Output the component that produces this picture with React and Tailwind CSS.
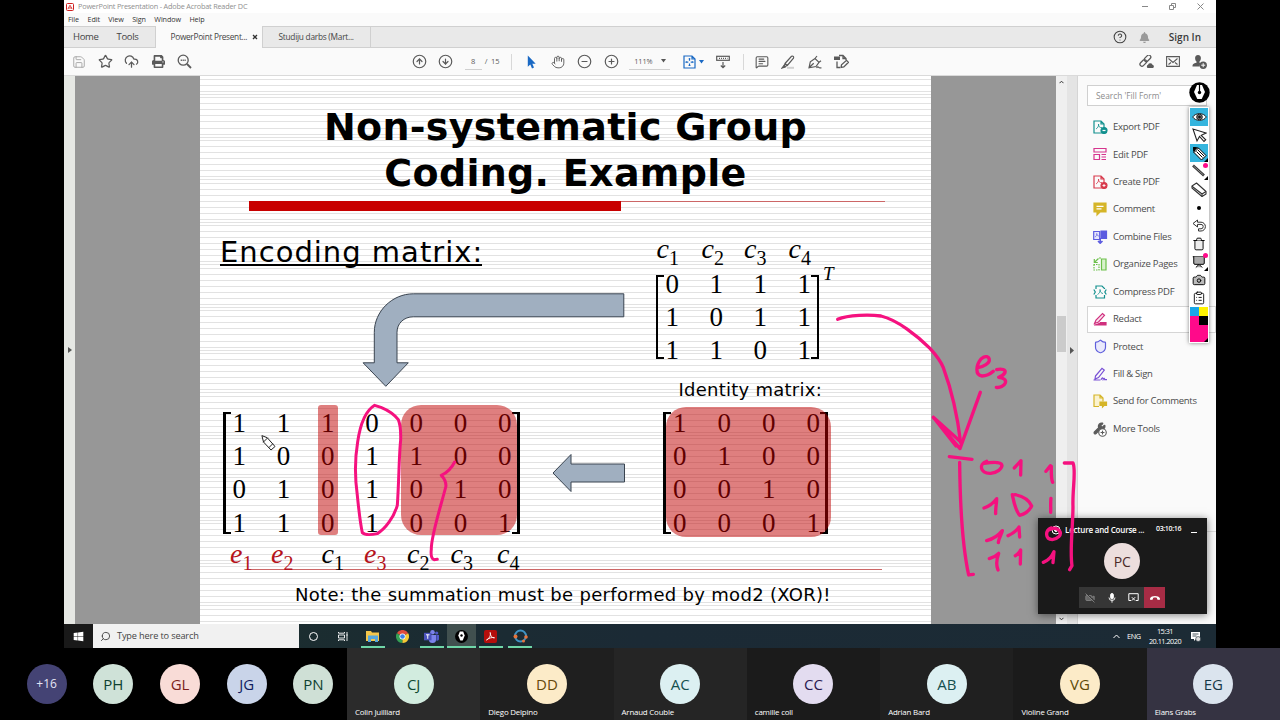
// App.jsx
import React from 'react';
import {
    Star,
    CloudUpload,
    Hand,
    CircleArrowUp,
    CircleArrowDown,
    CircleMinus,
    CirclePlus,
    MessageSquareText,
    CircleQuestionMark,
    Search,
    Trash2,
    ClipboardList,
    Camera,
    Shield,
    Wrench,
    VideoOff,
    Save,
    Presentation,
} from 'lucide-react';
import { FaBell, FaWindows, FaPrint } from 'react-icons/fa';

const encoding = ['1110000', '1001100', '0101010', '1101001'];
const checks = ['0111', '1011', '1101'];
const identity = ['1000', '0100', '0010', '0001'];

// Ruled slide paper: groups of lines repeat every 42.6px
const ruleLines = [];
for (let start = -24.6; start < 548; start += 42.6) {
    [0, 3.3, 9.3, 15.3, 21.4, 27.4, 33.5, 39.6].forEach((offset) => ruleLines.push(Math.round(start + offset)));
}

function Sym({ letter, index, red }) {
    return (
        <span className={red ? 'text-[#b5121b]' : 'text-black'}>
            <i className="text-[28px]">{letter}</i>
            <sub className="-bottom-[7px] text-[20px]">{index}</sub>
        </span>
    );
}

function Matrix({ rows, width, bracket }) {
    return (
        <div className="flex">
            <div className={`w-2 border-y-2 border-r-0 border-black ${bracket}`} />
            <div className={`flex flex-col pl-[2px] ${width}`}>
                {rows.map((row, i) => (
                    <div key={i} className="flex h-[33.2px] justify-between text-[27px] leading-[33.2px]">
                        {row.split('').map((digit, j) => (
                            <span key={j}>{digit}</span>
                        ))}
                    </div>
                ))}
            </div>
            <div className={`w-2 -scale-x-100 border-y-2 border-r-0 border-black ${bracket}`} />
        </div>
    );
}

function Slide() {
    return (
        <div className="relative h-[548px] w-[731px] shrink-0 overflow-hidden bg-white text-black">
            <svg className="absolute inset-0" width="731" height="548" shapeRendering="crispEdges">
                {ruleLines.map((y) => (
                    <rect key={y} x="0" y={y} width="731" height="1" fill="#e2e2e2" />
                ))}
            </svg>
            <div className="relative">
                <h1 className="pt-[27.5px] text-center font-['DejaVu_Sans'] text-[38px] leading-[46px] font-bold tracking-[0.3px]">
                    Non-systematic Group
                    <br />
                    Coding. Example
                </h1>
                <div className="mt-[5.5px] ml-[49px] h-[10px] w-[636px] border-t border-[#cc6666]">
                    <div className="-mt-px h-[10px] w-[372px] bg-[#c80000]" />
                </div>

                <div className="flex h-[358px] font-['Liberation_Serif']">
                    <div className="w-[455.5px] shrink-0">
                        <h2 className="mt-[23px] ml-5 h-9 font-['DejaVu_Sans'] text-[29px] leading-9 tracking-[1px] whitespace-nowrap">
                            <span className="inline-block h-[32px] w-[262px] border-b-2 border-black">Encoding matrix:</span>
                        </h2>
                        <svg className="mt-[23px] ml-[162px]" width="264" height="94" fill="#a0afc0" stroke="#3a4450" strokeWidth="1">
                            <path d="M261.5 .5H51C30 .5 12 18 12 39v30.500H.8L23.500 93 46 69.500H34.700V39c0-9 7-15.500 16.300-15.500h210.500z" transform="translate(.3 .3)" />
                        </svg>
                        <div className="mt-[20px] ml-[22.5px] flex items-center">
                            <Matrix rows={encoding} width="w-[281px]" bracket="mt-[5px] mb-[6px] border-l-[3px]" />
                            <svg className="ml-[32px]" width="75" height="40" fill="#a0afc0" stroke="#3a4450">
                                <path d="M1 20 19 1.500V11h53.500v18H19v9.500z" />
                            </svg>
                        </div>
                        <div className="-mt-[2px] ml-[30px] grid h-8 grid-cols-[41px_50.5px_42.5px_43px_43.5px_46.5px_24px] leading-8 whitespace-nowrap">
                            <Sym letter="e" index="1" red />
                            <Sym letter="e" index="2" red />
                            <Sym letter="c" index="1" />
                            <Sym letter="e" index="3" red />
                            <Sym letter="c" index="2" />
                            <Sym letter="c" index="3" />
                            <Sym letter="c" index="4" />
                        </div>
                    </div>

                    <div className="flex-1">
                        <div className="mt-[22px] ml-px grid h-8 grid-cols-[45px_42.5px_44.5px_24px] leading-8 whitespace-nowrap">
                            <Sym letter="c" index="1" />
                            <Sym letter="c" index="2" />
                            <Sym letter="c" index="3" />
                            <Sym letter="c" index="4" />
                        </div>
                        <div className="mt-[2.5px] flex">
                            <Matrix rows={checks} width="w-[147.5px]" bracket="mt-[7px] mb-[8px] border-l-2" />
                            <i className="ml-[4px] text-[19px] leading-[12px]">T</i>
                        </div>
                        <p className="mt-[11px] ml-[23px] font-['DejaVu_Sans'] text-[18px] leading-6 tracking-[0.25px] whitespace-nowrap">
                            Identity matrix:
                        </p>
                        <div className="mt-[5px] ml-[7.5px]">
                            <Matrix rows={identity} width="w-[149px]" bracket="mt-[5px] mb-[6px] border-l-[3px]" />
                        </div>
                    </div>
                </div>

                <div className="ml-[49px] h-px w-[633px] bg-[#cc6666]" />
                <p className="mt-[13px] ml-[95px] font-['DejaVu_Sans'] text-[18px] leading-6 tracking-[0.3px] whitespace-nowrap">
                    Note: the summation must be performed by mod2 (XOR)!
                </p>
            </div>

            {/* highlighted areas */}
            <div className="absolute top-[329px] left-[118px] h-[130px] w-5 rounded-[3px] bg-[rgba(192,0,0,0.5)]" />
            <div className="absolute top-[329px] left-[200.5px] h-[130px] w-[116.5px] rounded-[20px] bg-[rgba(192,0,0,0.5)]" />
            <div className="absolute top-[331px] left-[466px] h-[130px] w-[165px] rounded-[20px] bg-[rgba(192,0,0,0.5)]" />
        </div>
    );
}

function Tool({ children, className = '' }) {
    return <div className={`flex w-[26.4px] shrink-0 items-center justify-center ${className}`}>{children}</div>;
}

function Caret({ className = 'text-[#555]' }) {
    return (
        <svg width="5" height="4" viewBox="0 0 5 4" fill="currentColor" className={className}>
            <path d="M0 0h5L2.500 3.500z" />
        </svg>
    );
}

function Toolbar() {
    return (
        <div className="flex h-7 items-center border-b border-[#dadada] bg-[#fafafa] pr-[3px] pl-[2px] text-[#5a5a5a]">
            <Tool><Save size={14} strokeWidth={1.5} className="text-[#a0a0a0]" /></Tool>
            <Tool><Star size={15} strokeWidth={2} /></Tool>
            <Tool><CloudUpload size={15} strokeWidth={2} /></Tool>
            <Tool><FaPrint size={13} /></Tool>
            <Tool>
                <svg width="15" height="15" viewBox="0 0 15 15" fill="none" stroke="currentColor" strokeWidth="1.3">
                    <circle cx="6.200" cy="6.200" r="5" />
                    <path d="m10 10 4 4" strokeWidth="1.800" />
                    <path d="M3.700 6.200h5" strokeWidth="1.500" strokeDasharray="1.200 .7" />
                </svg>
            </Tool>
            <Tool className="ml-[208px]"><CircleArrowUp size={15} strokeWidth={1.9} /></Tool>
            <Tool><CircleArrowDown size={15} strokeWidth={1.9} /></Tool>
            <span className="ml-[6px] h-[17px] w-[17px] border-b border-[#d0d0d0] text-center text-[7.5px] leading-[17px]">8</span>
            <span className="ml-[3px] w-[26px] text-[7.5px] tracking-[-0.1px] whitespace-pre">/  15</span>
            <div className="h-4 w-px bg-[#d8d8d8]" />
            <Tool className="ml-[7px]">
                <svg width="9" height="14" viewBox="0 0 9 14" fill="#1a69c4">
                    <path d="M.8.500v11.200l2.500-2.300 1.700 4 2-.9-1.700-3.800h3.400z" />
                </svg>
            </Tool>
            <Tool><Hand size={14} strokeWidth={1.6} /></Tool>
            <Tool><CircleMinus size={15} strokeWidth={1.9} /></Tool>
            <Tool><CirclePlus size={15} strokeWidth={1.9} /></Tool>
            <span className="ml-[5px] flex h-[17px] w-[41px] items-center justify-between border-b border-[#d0d0d0] pr-1 pl-[5px] text-[7.3px] tracking-[-0.1px]">
                111% <Caret />
            </span>
            <span className="ml-[13px] flex w-[21px] items-center justify-between text-[#1a69c4]">
                <svg width="13" height="14" viewBox="0 0 13 14" fill="none" stroke="currentColor" strokeWidth="1.2">
                    <path d="M1 1h8l3 3v9H1zM9 1v3h3" />
                    <path d="M6.500 3.200v2.500M6.500 8.500V11M2.700 7.100h2.600M7.700 7.100h2.600" />
                    <path d="m5.500 4.200 1-1 1 1M5.500 10l1 1 1-1M3.700 6.100l-1 1 1 1M9.300 6.100l1 1-1 1" strokeWidth=".7" />
                </svg>
                <Caret className="text-[#1a69c4]" />
            </span>
            <Tool className="ml-[6px]">
                <svg width="14" height="14" viewBox="0 0 14 14" fill="none" stroke="currentColor" strokeWidth="1.200">
                    <rect x=".7" y="1.300" width="12.600" height="4" />
                    <path d="M3 3.300h8.500" strokeDasharray="1 1" />
                    <path d="M7 7v5.500M4.800 10.500 7 12.700l2.200-2.200" />
                </svg>
            </Tool>
            <div className="ml-[6px] h-4 w-px bg-[#d8d8d8]" />
            <Tool className="ml-[5px]"><MessageSquareText size={14} strokeWidth={1.9} /></Tool>
            <Tool>
                <svg width="14" height="14" viewBox="0 0 14 14" fill="none" stroke="currentColor" strokeWidth="1.200">
                    <path d="M6 12.800h7" stroke="#d0d0d0" strokeWidth="2" />
                    <path d="M4 8.500 10.500 1.300c1.500-.7 2.600.4 2 1.800L6.300 10.500 3 12zM4 8.500l2.300 2" />
                    <path d="m1 13 2-2.500 1.200 1.400z" fill="currentColor" />
                </svg>
            </Tool>
            <Tool>
                <svg width="14" height="14" viewBox="0 0 14 14" fill="none" stroke="currentColor" strokeWidth="1.200">
                    <path d="m1 12.800 1.300-6L7 3.500l4 3.800-3 4.200zM7 3.500 9 1M11 7.300l2-1.500M1 12.800l4.700-4.500" />
                    <path d="M8.500 13c1.500-2 2-.8 2.500-.4.600.5 1 0 2.500.4" />
                </svg>
            </Tool>
            <Tool>
                <svg width="15" height="15" viewBox="0 0 15 15" fill="none" stroke="currentColor" strokeWidth="1.300">
                    <path d="M5 1.500h4l3 3v1.500M9 1.500v3h3M3 7.500v6h3" />
                    <rect x="0" y="2.500" width="6" height="3.500" fill="currentColor" stroke="none" />
                    <path d="m7 13.500.5-2.700 5-4.500 2 2-4.700 4.700z" />
                </svg>
            </Tool>
            <Tool className="ml-auto">
                <svg width="16" height="14" viewBox="0 0 16 14" fill="none" stroke="currentColor" strokeWidth="1.300">
                    <rect x="4.800" y="1.300" width="7.500" height="4" rx="2" transform="rotate(-45 8.500 3.300)" />
                    <rect x=".5" y="6" width="7.500" height="4" rx="2" transform="rotate(-45 4.200 8)" />
                    <path d="M8.500 13a2 2 0 0 1 .5-3.300 2.500 2.500 0 0 1 4.500 0A1.800 1.800 0 0 1 14 13z" fill="currentColor" stroke="none" />
                </svg>
            </Tool>
            <Tool>
                <svg width="14" height="11" viewBox="0 0 14 11" fill="none" stroke="currentColor" strokeWidth="1.100">
                    <path d="M.6.600h12.800v9.800H.6zM2.500 2.500 7 6.500l4.500-4M2.500 8.500l2.500-2M11.500 8.500 9 6.500" />
                </svg>
            </Tool>
            <Tool>
                <svg width="15" height="14" viewBox="0 0 15 14" fill="currentColor">
                    <path d="M6 0c2 0 3 1.500 2.900 3.200C8.800 5 8 6 7.500 6.500v1.200L9 8.300a4 4 0 0 0-1.500 3.200H.5c0-2.500.8-3 4-3.800V6.500C3.800 6 3.200 5 3.100 3.200 3 1.500 4 0 6 0z" />
                    <circle cx="11.200" cy="10.200" r="3.700" />
                    <path d="M11.200 8.200v4M9.200 10.200h4" stroke="#fafafa" strokeWidth="1" />
                </svg>
            </Tool>
        </div>
    );
}

const doc = 'M1 1h7l3 3v9H1zM8 1v3h3';
const panelItems = [
    {
        label: 'Export PDF',
        icon: (
            <g stroke="#12908e">
                <path d={doc} />
                <path d="M3 9c2-1 3-4 2.500-5C5.500 7 7 8 9 7.500" strokeWidth=".8" />
                <circle cx="11" cy="10.500" r="3" fill="#12908e" />
                <path d="M9.500 10.500h3" stroke="#fff" />
            </g>
        ),
    },
    {
        label: 'Edit PDF',
        icon: <path d="M1 1.500h12v3.500H1zM1 7.500h5.500v5H1zM8.500 7.500H13M8.500 10H13M8.500 12.500H13" stroke="#d6358e" />,
    },
    {
        label: 'Create PDF',
        icon: (
            <g stroke="#d83a4c">
                <path d={doc} />
                <path d="M3 9c2-1 3-4 2.500-5C5.500 7 7 8 9 7.500" strokeWidth=".8" />
                <circle cx="11" cy="10.500" r="3" fill="#d83a4c" />
                <path d="M9.500 10.500h3M11 9v3" stroke="#fff" strokeWidth=".9" />
            </g>
        ),
    },
    {
        label: 'Comment',
        icon: (
            <g>
                <path d="M1 1h12v9H7l-3 3v-3H1z" fill="#d5b528" stroke="#d5b528" />
                <path d="M3.500 4.300h7M3.500 6.800h5" stroke="#fff" />
            </g>
        ),
    },
    {
        label: 'Combine Files',
        icon: (
            <g stroke="#5c5ce0">
                <path d="M.7 1.500h6v8h-6z" fill="#e6e6fb" />
                <path d="M8 1h5.500v7.500H8z" fill="#5c5ce0" />
                <path d="M2 7c1.500-.8 2-2.500 1.700-3.500C4 5.500 5 6 6 6" strokeWidth=".7" />
                <path d="M7.200 8v5M5 11l2.200 2.200L9.500 11" strokeWidth="1.600" />
            </g>
        ),
    },
    {
        label: 'Organize Pages',
        icon: (
            <g stroke="#6cc04a">
                <path d="M8.500 2h4.500v11H8.500z" fill="#d9f2cc" />
                <path d="M1 7.500V13h5V7.500z" strokeDasharray="1.500 1" />
                <path d="M5.500 1.500 1.500 5.200M1.300 2v3.500h3.500M6 1h2" />
            </g>
        ),
    },
    {
        label: 'Compress PDF',
        icon: (
            <g stroke="#12908e">
                <path d="M3 4V1h6l2.500 2.500V4M3 10v3h8.500v-3" />
                <path d="m.8 4.500 1.500 2.500L.8 9.500M13.300 4.500 11.800 7l1.500 2.500" />
                <path d="M4.500 9.500c2-1 3-3.500 2.500-5 0 2.500 1.500 4 3 4" strokeWidth=".8" />
            </g>
        ),
    },
    {
        label: 'Redact',
        active: true,
        icon: (
            <g stroke="#d0307e">
                <path d="M1 13h12v-2.500H7" fill="#d0307e" />
                <path d="M1.500 11.500 3 8 9.500 1.500l2 1.800L5.500 10z" fill="#fbe3ef" />
            </g>
        ),
    },
    { label: 'Protect', lucide: <Shield size={15} strokeWidth={1.9} className="fill-[#e9e9fc] text-[#5f5fdc]" /> },
    {
        label: 'Fill & Sign',
        icon: (
            <g stroke="#7a52d6">
                <path d="M2.500 9 9 1.300l2.300 1.900L5.500 10.500 2 12zM.5 13h7" />
                <path d="M8 12.800c1-2.500 2-2.500 2.200-.5.800-1.500 1.500-1 1.500.4H14" />
            </g>
        ),
    },
    {
        label: 'Send for Comments',
        icon: (
            <g stroke="#d5b528">
                <path d="M6 12.500H1V1h6l3 3v3.500M7 1v3h3" fill="#fbf3cf" />
                <path d="M7 8h6.500v3.500H11L9.500 13v-1.500H7z" fill="#d5b528" />
            </g>
        ),
    },
    {
        label: 'More Tools',
        lucide: (
            <div className="flex h-[15px] w-[15px] items-end">
                <Wrench size={13} strokeWidth={2.2} className="-mr-2 mb-[2px] shrink-0 fill-[#5a5a5a] text-[#5a5a5a]" />
                <CirclePlus size={9} strokeWidth={3} className="shrink-0 fill-white text-[#5a5a5a]" />
            </div>
        ),
    },
];

function SidePanel() {
    return (
        <aside className="flex h-[548px] flex-1 flex-col border-l border-[#d5d5d5] bg-[#fafafa] pl-[9px]">
            <div className="mt-[9px] h-[21px] w-[120px] border border-[#d0d0d0] bg-white pl-2 text-[8.3px] leading-[20px] text-[#8c8c8c]">
                Search 'Fill Form'
            </div>
            <ul className="mt-[7.5px]">
                {panelItems.map((item) => (
                    <li
                        key={item.label}
                        className={`flex h-[27.45px] items-center ${item.active ? 'border border-[#d5d5d5] bg-white pl-[5px]' : 'pl-[6px]'}`}
                    >
                        <span className="flex w-5 shrink-0">
                            {item.lucide || (
                                <svg width="14.5" height="14.5" viewBox="0 0 14.500 14.500" fill="none" strokeWidth="1.200">
                                    {item.icon}
                                </svg>
                            )}
                        </span>
                        <span className="text-[9.5px] tracking-[-0.27px] whitespace-nowrap text-[#4b4b4b]">{item.label}</span>
                    </li>
                ))}
            </ul>
            <div className="mt-[88px] border-b border-[#dcdcdc]" />
        </aside>
    );
}

function Acrobat() {
    return (
        <div className="flex h-[624px] flex-col bg-[#fafafa]">
            <div className="flex h-[13px] items-center bg-white pl-[2px] text-[7.3px] tracking-[-0.2px] text-[#8f8f8f]">
                <svg width="8" height="8" viewBox="0 0 8 8" fill="none" stroke="#d02020" className="mr-1">
                    <rect x=".5" y=".5" width="7" height="7" rx="1" />
                    <path d="m1.800 6.200 2.200-4 2.200 4M2.500 5h3.200" strokeWidth=".8" />
                </svg>
                PowerPoint Presentation - Adobe Acrobat Reader DC
                <span className="ml-auto flex items-center gap-[21px] pr-[12px]">
                    <svg width="6" height="7" stroke="#888"><path d="M0 3.500h6" /></svg>
                    <svg width="7" height="7" fill="none" stroke="#888"><path d="M.5 2.500h4v4h-4zM2.500 2V.5h4v4H5" /></svg>
                    <svg width="7" height="7" stroke="#888"><path d="m.5.500 6 6M6.500.500l-6 6" /></svg>
                </span>
            </div>
            <div className="flex h-[13px] items-center gap-[8.5px] pl-1 text-[7.2px] tracking-[-0.1px] text-[#333]">
                <span>File</span>
                <span>Edit</span>
                <span>View</span>
                <span>Sign</span>
                <span>Window</span>
                <span>Help</span>
            </div>
            <div className="flex h-[22px] items-center border-y border-[#d0d0d0] bg-[#e9e9e9] text-[#444]">
                <span className="w-[43.5px] pl-[9px] text-[9.5px] tracking-[-0.3px]">Home</span>
                <span className="w-[47px] pl-[9px] text-[9.5px] tracking-[-0.3px]">Tools</span>
                <span className="flex h-[22px] w-[108px] items-center border-x border-[#d0d0d0] bg-[#fafafa] pr-[4px] pl-[15px] text-[8.3px] tracking-[-0.3px] whitespace-nowrap">
                    PowerPoint Present...
                    <svg className="ml-auto" width="6" height="6" viewBox="0 0 6 6" stroke="#333" strokeWidth="1.300"><path d="m1 1 4 4M5 1 1 5" /></svg>
                </span>
                <span className="h-5 w-[108px] border-r border-[#d0d0d0] pl-4 text-[8.3px] leading-5 tracking-[-0.25px] whitespace-nowrap">
                    Studiju darbs (Mart...
                </span>
                <span className="ml-auto flex items-center pr-[15px]">
                    <CircleQuestionMark size={14} strokeWidth={1.8} />
                    <FaBell size={11} className="ml-[12px] text-[#9a9a9a]" />
                    <span className="ml-[19px] text-[10px] font-semibold text-[#3a3a3a]">Sign In</span>
                </span>
            </div>
            <Toolbar />
            <div className="flex h-[548px]">
                <div className="flex w-[11px] items-center justify-center bg-[#e6e8e4]">
                    <svg width="4" height="6" fill="#555"><path d="M0 0v6l4-3z" /></svg>
                </div>
                <div className="w-[125px] shrink-0 bg-[#979797]" />
                <Slide />
                <div className="w-[125px] shrink-0 bg-[#979797]" />
                <div className="flex w-[11px] shrink-0 flex-col items-center bg-[#efefef]">
                    <svg className="mt-1" width="5" height="4" fill="none" stroke="#333"><path d="m.5 3.200 2-2 2 2" /></svg>
                    <div className="mt-[232px] h-[36px] w-[9px] bg-[#cbcbcb]" />
                    <svg className="mt-auto mb-[3px]" width="5" height="4" fill="none" stroke="#333"><path d="m.5.800 2 2 2-2" /></svg>
                </div>
                <div className="flex w-[10px] shrink-0 items-center justify-center bg-[#e4e4e4]">
                    <svg width="4" height="7" fill="#555"><path d="M0 0v7l4-3.500z" /></svg>
                </div>
                <SidePanel />
            </div>
        </div>
    );
}

// Floating annotation palette
function PenPalette() {
    const cell = 'relative flex h-[18.1px] items-center justify-center';
    const corner = <span className="absolute right-0 bottom-0 border-b-4 border-l-4 border-b-black border-l-transparent" />;
    return (
        <div className="absolute top-[82px] left-[1188px] flex w-[22px] flex-col items-center">
            <svg width="21" height="21" viewBox="0 0 21 21">
                <circle cx="10.500" cy="10.500" r="10.200" fill="#000" />
                <path d="M8 3 5 10l3.300 7h4.400l3.300-7-3-7z" fill="#fff" />
                <path d="M10.500 2v8" stroke="#000" strokeWidth="1.200" />
                <circle cx="10.500" cy="10.500" r="1.700" fill="#000" />
            </svg>
            <div className="mt-[4px] w-[20px] border border-white bg-white text-black shadow-[0_0_4px_rgba(0,0,0,0.5)]">
                <div className={`${cell} bg-[#35b5de]`}>
                    <svg width="15" height="10" viewBox="0 0 15 10" stroke="#222" strokeWidth="1">
                        <path d="M.7 5C3.500.500 11.500.500 14.300 5 11.500 9.500 3.500 9.500.7 5z" fill="#fff" />
                        <circle cx="7.500" cy="5" r="2.800" fill="#777" />
                        <circle cx="7.500" cy="5" r="1" fill="#000" />
                    </svg>
                </div>
                <div className={cell}>
                    <svg width="15" height="15" viewBox="0 0 15 15" fill="none" stroke="#222" strokeWidth="1.100">
                        <path d="m1 1 4 12 2.500-4.500 4.500 5 1.700-1.700-4.500-4.500L14 5z" />
                    </svg>
                </div>
                <div className={`${cell} bg-[#35b5de]`}>
                    <svg width="15" height="15" viewBox="0 0 15 15" fill="#fff" stroke="#000" strokeWidth="1">
                        <path d="m1.500 1.500 5 .5 7.500 7.500-4.500 4.500L2 6.500zM2 6.500 6.500 2M4.500 5.500l6 6M6 4l6 6" />
                        <path d="m1.500 1.500 3 .5-2.500 3z" fill="#000" />
                    </svg>
                    {corner}
                </div>
                <div className={cell}>
                    <svg width="16" height="16" viewBox="0 0 16 16" stroke="#333" strokeWidth="2.600"><path d="m2 2.500 11 10" /><path d="m2.500 3 10 9" stroke="#aaa" strokeWidth=".8" /></svg>
                    <span className="absolute top-px right-0 h-[5px] w-[5px] rounded-full bg-[#ff0a8a]" />
                    {corner}
                </div>
                <div className={cell}>
                    <svg width="16" height="15" viewBox="0 0 16 15" fill="#fff" stroke="#333" strokeWidth="1.100" strokeLinejoin="round">
                        <path d="M5.500 1 15 9.500v2.500L11 14.500 1 6V4z" />
                        <path d="M1 4.200 11 12l4-2.500M11 12v2.500" fill="none" />
                    </svg>
                </div>
                <div className={cell}><span className="h-[4px] w-[4px] rounded-full bg-black" /></div>
                <div className={cell}>
                    <svg width="15" height="13" viewBox="0 0 15 13" fill="#fff" stroke="#333" strokeWidth="1" strokeLinejoin="round">
                        <path d="M1 4.500 5.500 1v2.200H9a4.400 4.400 0 0 1 0 8.800H6.500V9.800H9a2.200 2.200 0 0 0 0-4.400H5.500V8z" />
                    </svg>
                </div>
                <div className={cell}><Trash2 size={14} strokeWidth={1.6} className="fill-[#eee]" /></div>
                <div className={cell}>
                    <Presentation size={14} strokeWidth={1.7} className="fill-[#aaa]" />
                    <span className="absolute top-0 right-0 h-[5px] w-[5px] rounded-full bg-[#ff0a8a]" />
                    {corner}
                </div>
                <div className={cell}><Camera size={14} strokeWidth={1.6} className="fill-[#bbb]" /></div>
                <div className={cell}><ClipboardList size={14} strokeWidth={1.5} /></div>
                <div className="relative grid h-[35px] grid-cols-2 grid-rows-[9px_9px_17px] bg-[#ff0a8a]">
                    <span className="bg-[#1aa7e8]" />
                    <span className="bg-[#fff200]" />
                    <span />
                    <span className="bg-black" />
                    {corner}
                </div>
            </div>
        </div>
    );
}

function CallWindow() {
    return (
        <div className="absolute top-[518px] left-[1038px] flex h-[96px] w-[168.5px] flex-col items-center bg-[#1a1a1a] text-white shadow-[0_1px_8px_rgba(0,0,0,0.5)]">
            <div className="flex h-[23px] w-full items-center pl-[13px] text-[8px]">
                <svg width="10" height="10" fill="none" stroke="#fff"><circle cx="5" cy="5" r="4" /><circle cx="5" cy="5" r="1.500" fill="#fff" /></svg>
                <span className="ml-1 w-[91px] font-semibold tracking-[-0.2px] whitespace-nowrap">Lecture and Course ...</span>
                <span className="text-[7px] font-semibold tracking-[-0.35px]">03:10:16</span>
                <span className="mt-[5px] ml-auto mr-[10px] h-px w-[6px] bg-white" />
            </div>
            <div className="mt-[2px] flex h-9 w-9 items-center justify-center rounded-full bg-[#ecdedd] text-[14px] text-[#4a2a28]">PC</div>
            <div className="mt-[8px] flex h-[21px] w-[86px] bg-[#363636]">
                <span className="flex flex-1 items-center justify-center text-[#888]"><VideoOff size={10} className="fill-[#666]" /></span>
                <span className="flex flex-1 items-center justify-center">
                    <svg width="8" height="10" viewBox="0 0 8 10" fill="none" stroke="#fff" strokeWidth=".9">
                        <rect x="2.600" y=".5" width="2.800" height="5.500" rx="1.400" fill="#fff" />
                        <path d="M1 4.500a3 3 0 0 0 6 0M4 7.500v2.200" />
                    </svg>
                </span>
                <span className="flex flex-1 items-center justify-center">
                    <svg width="11" height="9" viewBox="0 0 11 9" fill="none" stroke="#fff"><path d="M3 7.500H.8V.7h9.400v6.800H8M3.800 4.200l3.400 3.400M7.200 4.200 3.800 7.600" /></svg>
                </span>
                <span className="flex flex-1 items-center justify-center bg-[#a72c45]">
                    <svg width="10" height="6" viewBox="0 0 10 6" fill="#fff"><path d="M0 3.500C1.500.300 8.500.300 10 3.500c0 1-.3 1.500-.8 1.400l-2-.5-.3-1.500C6 2.500 4 2.500 3.100 2.900l-.3 1.500-2 .5C.300 5 0 4.500 0 3.500z" /></svg>
                </span>
            </div>
        </div>
    );
}

// Pink pen strokes drawn across the whole desktop
function Ink() {
    return (
        <svg
            className="pointer-events-none absolute inset-0"
            width="1280"
            height="648"
            fill="none"
            stroke="#f5117f"
            strokeLinecap="round"
            strokeLinejoin="round"
        >
            <g transform="translate(820 300) scale(.3333)" strokeWidth="10">
                <path d="M53 58C85 44 150 44 183 48c50 12 110 60 147 97 20 22 33 40 40 58 22 60 42 140 52 225" />
                <path d="M481 277 420 446 340 352 422 425M340 352l68 86" />
                <path d="M474 203c18-3 34-14 34-22 0-12-12-15-24-5-16 18-20 50 2 52 12 0 25-6 34-14" />
                <path d="M530 209c15-4 28 0 25 9-5 9-13 12-19 14 13 1 24 7 20 17-4 9-16 15-27 13" />
                <path d="M388 470l68 8M419 487c1 100 8 250 27 338l14-2" />
                <path d="M500 484c-25 8-20 37 12 36 20-2 34-14 34-24-2-10-26-10-54-6" />
                <path d="M583 504l20-22-1 43M678 514l13-17 3 2c0 20-1 38 4 48" />
                <path d="M492 624c15-5 28-15 38-28 0 15-4 32-3 45M577 584c5 25 8 45 22 62 18-4 30-16 36-28-8-18-28-30-50-34M693 595c-2 15 0 28-1 42" />
                <path d="M500 722c20-5 35-15 47-30-2 12-11 22-12 36M564 707c13-6 25-12 33-26l2 30M693 684c-18 8-18 34 4 35 18-2 26-14 24-22-6-12-22-16-32-8" />
                <path d="M508 776c15-4 22-10 28-16-8 22-8 35-2 50M586 767c8-4 13-10 16-17l-1 42M670 787c15-5 25-17 32-32l-3 33" />
                <path d="M733 489h26c10 20-2 80 0 130 0 60-10 130-3 178l-7 12" />
            </g>
            <g transform="translate(200 380) scale(.3333)" strokeWidth="9">
                <path d="M524 76c-25 15-43 55-51 110-10 60-8 110-1 160 4 40 8 80 15 112 10 10 30 6 45 3 25-15 50-50 60-85 5-70 5-150 10-195 1-30-2-50-7-62-15-20-35-30-52-37z" />
                <path d="M764 246c-10 20-22 32-40 40 8 8 14 18 14 32-15 60-45 150-44 190-2 18 0 28 8 31l10-1" />
            </g>
            <path d="m262 436 1.500 6 7.500 8 4-3.500-7.500-8.500zm1.500 6 4-4M269 447.500l3.500-3.500" stroke="#222" fill="#fff" strokeWidth="1" />
        </svg>
    );
}

function Task({ children, open, active }) {
    return (
        <div className={`flex h-6 w-[29.5px] items-center justify-center pt-[2px] ${active ? 'bg-[#41504f]' : ''}`}>
            <div className={`flex h-[22px] items-center justify-center border-b-2 ${active ? 'w-full' : 'w-6'} ${open ? 'border-[#6fd6a8]' : 'border-transparent'}`}>
                {children}
            </div>
        </div>
    );
}

function Taskbar() {
    return (
        <div className="flex h-6 items-center bg-gradient-to-r from-[#1b2e2c] via-[#1b2a35] to-[#1c2b35] text-white">
            <div className="flex h-6 w-[29px] items-center justify-center bg-[#191919]"><FaWindows size={11} /></div>
            <div className="flex h-6 w-[206px] items-center gap-[6px] bg-[#f1f1f1] pl-[7px] text-[9.2px] tracking-[-0.15px] text-[#444]">
                <Search size={11} className="-scale-x-100" />
                Type here to search
            </div>
            <Task><span className="h-[9px] w-[9px] rounded-full border-[1.5px] border-white" /></Task>
            <Task>
                <svg width="10" height="9" viewBox="0 0 10 9" fill="none" stroke="#fff" strokeWidth=".9"><path d="M.5 3h6v3h-6zM.5 0v1.200h6V0M.5 9V7.800h6V9M9 0v9M8.300 3h1.400" /></svg>
            </Task>
            <Task open>
                <svg width="14" height="12" viewBox="0 0 14 12"><path d="M0 1h5l1 1.500h7V11H0z" fill="#f3c64b" /><path d="M2 5.500h10V12H9V9H5v3H2z" fill="#57a7dc" /></svg>
            </Task>
            <Task>
                <svg width="13" height="13" viewBox="0 0 14 14">
                    <path d="M7 7 .9 3.500A7 7 0 0 1 13.100 3.500z" fill="#e14a3c" />
                    <path d="M7 7 .9 3.500A7 7 0 0 0 7 14z" fill="#35a155" />
                    <path d="M7 7h0l6.100-3.500A7 7 0 0 1 7 14z" fill="#f6c935" />
                    <circle cx="7" cy="7" r="3.200" fill="#fff" />
                    <circle cx="7" cy="7" r="2.500" fill="#4080e8" />
                </svg>
            </Task>
            <Task open>
                <svg width="15" height="13" viewBox="0 0 15 13">
                    <circle cx="8.500" cy="2.300" r="2.300" fill="#7b83eb" />
                    <circle cx="12.700" cy="3" r="1.600" fill="#5059c9" />
                    <path d="M5 5h7v5a3.500 3 0 0 1-7 0z" fill="#7b83eb" />
                    <path d="M12.300 5H15v4c0 1.500-1.500 2-2.700 1.500z" fill="#5059c9" />
                    <rect y="2.800" width="7.500" height="7.500" fill="#4b53bc" />
                    <path d="M2 4.800h3.500M3.750 4.800v4" stroke="#fff" />
                </svg>
            </Task>
            <Task open active>
                <svg width="13" height="13" viewBox="0 0 13 13"><circle cx="6.500" cy="6.500" r="6.500" fill="#000" /><path d="M4.800 1.500h3.400l1.500 4-2 5H5.300l-2-5z" fill="#fff" /><circle cx="6.500" cy="5.500" r="1.200" fill="#000" /></svg>
            </Task>
            <Task open>
                <svg width="13" height="13" viewBox="0 0 13 13" fill="none"><rect width="13" height="13" rx="2" fill="#b40f0c" /><path d="M2.500 10c3-1.500 4.500-5 3.700-7.500C6.200 6 8 8 10.500 7.800 8 7 5 8 2.500 10z" stroke="#fff" strokeWidth=".9" /></svg>
            </Task>
            <Task open>
                <svg width="15" height="14" viewBox="0 0 15 14" fill="none" strokeWidth="2"><circle cx="7.500" cy="7" r="5.500" stroke="#3f93c4" /><g fill="#e8743b"><circle cx="2.500" cy="7.500" r="2" /><circle cx="13" cy="8" r="1.800" /><circle cx="10.500" cy="12" r="1.500" /></g></svg>
            </Task>
            <div className="ml-auto flex items-center pr-[15px]">
                <svg width="7" height="5" fill="none" stroke="#fff"><path d="m.5 4 3-3 3 3" /></svg>
                <span className="ml-[7px] w-[15px] text-[7.3px] tracking-[-0.4px]">ENG</span>
                <span className="ml-[4px] w-[38px] text-center text-[7.3px] leading-[10.500px] tracking-[-0.5px]">
                    15:31
                    <br />
                    20.11.2020
                </span>
                <svg className="ml-[6px]" width="11" height="11" viewBox="0 0 11 11"><path d="M1 1h9v7H6L4 10V8H1z" fill="#fff" /><path d="M2.500 3h6M2.500 5h4" stroke="#1c2b35" strokeWidth=".8" /><circle cx="8.200" cy="8" r="2.500" fill="#ddd" stroke="#1c2b35" strokeWidth=".6" /></svg>
            </div>
        </div>
    );
}

const attendees = [
    { initials: '+16', style: 'bg-[#444374] text-[12px] text-[#e5e5f5]' },
    { initials: 'PH', style: 'bg-[#cfe2d8] text-[15px] text-[#0e4030]' },
    { initials: 'GL', style: 'bg-[#f9dcd7] text-[15px] text-[#7c1f1c]' },
    { initials: 'JG', style: 'bg-[#c9d4e9] text-[15px] text-[#101c60]' },
    { initials: 'PN', style: 'bg-[#cfe0d6] text-[15px] text-[#0e4030]' },
];

const tiles = [
    { initials: 'CJ', name: 'Colin Juilliard', tile: 'bg-[#2b2b2b]', style: 'bg-[#d2ecdf] text-[#0d4a30]' },
    { initials: 'DD', name: 'Diego Delpino', tile: 'bg-[#1f1f1f]', style: 'bg-[#fcebc8] text-[#66490a]' },
    { initials: 'AC', name: 'Arnaud Couble', tile: 'bg-[#252525]', style: 'bg-[#dcf0f2] text-[#15504f]' },
    { initials: 'CC', name: 'camille coll', tile: 'bg-[#1b1b1b]', style: 'bg-[#e3dcf0] text-[#2b1a50]' },
    { initials: 'AB', name: 'Adrian Bard', tile: 'bg-[#202020]', style: 'bg-[#dcf0f2] text-[#15504f]' },
    { initials: 'VG', name: 'Violine Grand', tile: 'bg-[#1b1b1b]', style: 'bg-[#fcebc8] text-[#5e4a08]' },
    { initials: 'EG', name: 'Elans Grabs', tile: 'bg-[#353342]', style: 'bg-[#dbe4ee] text-[#173848]' },
];

function Participants() {
    return (
        <div className="flex h-[72px] bg-black font-medium">
            <div className="flex w-[347px] shrink-0 pl-[13.3px]">
                {attendees.map((person) => (
                    <div key={person.initials} className="flex w-[66.7px] items-center justify-center">
                        <div className={`flex h-10 w-10 items-center justify-center rounded-full ${person.style}`}>{person.initials}</div>
                    </div>
                ))}
            </div>
            {tiles.map((person) => (
                <div key={person.initials} className={`flex flex-1 flex-col pt-4 ${person.tile}`}>
                    <div className={`mx-auto flex h-10 w-10 items-center justify-center rounded-full text-[15px] ${person.style}`}>
                        {person.initials}
                    </div>
                    <span className="mt-[2px] pl-2 text-[7.9px] leading-3 tracking-[-0.2px] whitespace-nowrap text-white">{person.name}</span>
                </div>
            ))}
        </div>
    );
}

export default function App() {
    return (
        <div className="relative h-[720px] w-[1280px] overflow-hidden bg-black font-['Open_Sans','Noto_Sans',sans-serif]">
            <div className="mx-16 h-[648px] overflow-hidden">
                <Acrobat />
                <Taskbar />
            </div>
            <Participants />
            <PenPalette />
            <CallWindow />
            <Ink />
        </div>
    );
}
